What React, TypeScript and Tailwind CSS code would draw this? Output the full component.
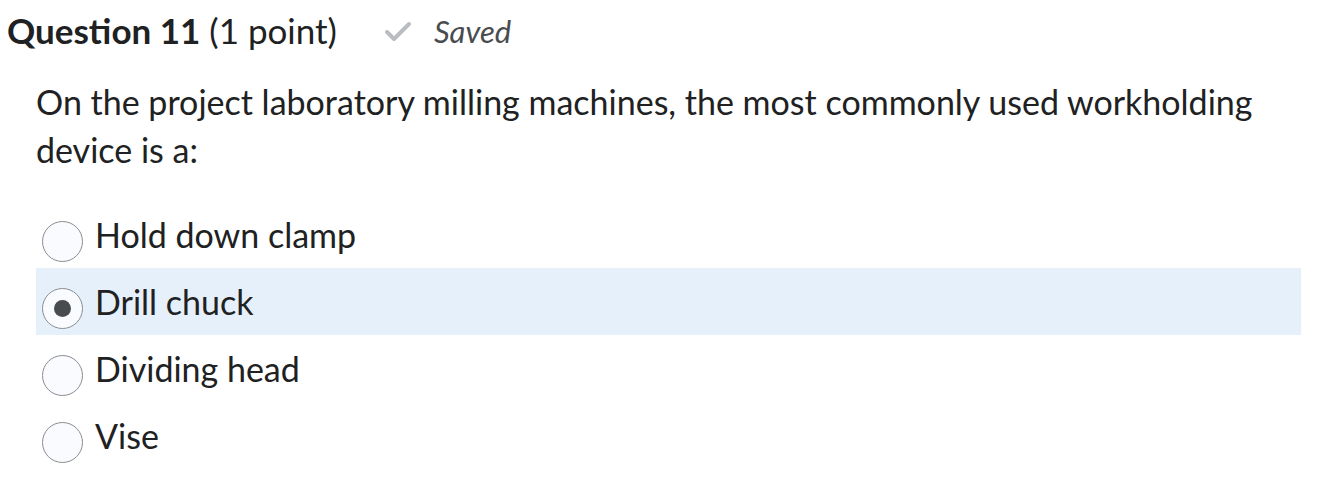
import clsx from 'clsx';

const options = ['Hold down clamp', 'Drill chuck', 'Dividing head', 'Vise'];
const selected = 1;

function Radio({ checked }: { checked: boolean }) {
  return (
    <span className="mt-[20px] w-[41px] h-[41px] shrink-0 rounded-full border border-[#8a8d90] bg-[#f9fbff] flex items-center justify-center">
      {checked && <span className="w-[17px] h-[17px] rounded-full bg-[#494c4e]" />}
    </span>
  );
}

function CheckIcon() {
  return (
    <svg width="28" height="22" viewBox="0 0 28 22" fill="none">
      <path d="M3 12l7 7L25 4" stroke="#b9bdc1" strokeWidth="4" strokeLinecap="round" strokeLinejoin="round" />
    </svg>
  );
}

export default function App() {
  return (
    <div className="bg-white w-[1331px] h-[490px] text-[#202122] font-['Lato','Liberation_Sans',sans-serif]">
      <div className="flex items-center pl-[7px] pt-[7px]">
        <h2 className="text-[35px] leading-[44px]">
          <span className="font-bold">Question 11</span> (1 point)
        </h2>
        <span className="ml-[47px] mt-[2px] flex items-center gap-[22px] text-[#494c4e] italic text-[31px] leading-[44px]">
          <CheckIcon />
          Saved
        </span>
      </div>

      <p className="pl-[36px] pr-[40px] mt-[25px] text-[34px] leading-[48px]">
        On the project laboratory milling machines, the most commonly used workholding device is a:
      </p>

      <div className="mt-[27px] ml-[36px] w-[1265px]">
        {options.map((o, i) => (
          <label
            key={o}
            className={clsx(
              'flex items-start h-[67px] pl-[6px] gap-[12px]',
              i === selected && 'bg-[#e6f0fb]'
            )}
          >
            <Radio checked={i === selected} />
            <span className="mt-[14px] text-[34px] leading-[40px]">{o}</span>
          </label>
        ))}
      </div>
    </div>
  );
}
